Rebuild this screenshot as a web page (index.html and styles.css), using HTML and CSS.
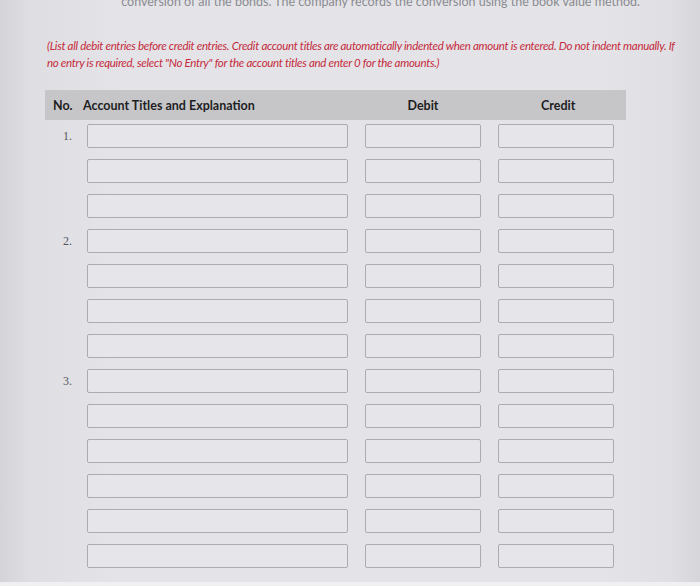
FILE: index.html
```html
<!DOCTYPE html>
<html lang="en">
<head>
<meta charset="utf-8">
<title>Journal entry</title>
<link rel="stylesheet" href="styles.css">
</head>
<body>
<div class="page">
  <p class="question">conversion of all the bonds. The company records the conversion using the book value method.</p>
  <p class="instructions">(List all debit entries before credit entries. Credit account titles are automatically indented when amount is entered. Do not indent manually. If no entry is required, select "No Entry" for the account titles and enter 0 for the amounts.)</p>
  <div class="journal">
    <div class="head">
      <span class="h-no">No.</span>
      <span class="h-acct">Account Titles and Explanation</span>
      <span class="h-amt">Debit</span>
      <span class="h-amt">Credit</span>
    </div>
    <div class="row"><span class="num">1.</span><span class="box acct"></span><span class="box amt"></span><span class="box amt"></span></div>
    <div class="row"><span class="num"></span><span class="box acct"></span><span class="box amt"></span><span class="box amt"></span></div>
    <div class="row"><span class="num"></span><span class="box acct"></span><span class="box amt"></span><span class="box amt"></span></div>
    <div class="row"><span class="num">2.</span><span class="box acct"></span><span class="box amt"></span><span class="box amt"></span></div>
    <div class="row"><span class="num"></span><span class="box acct"></span><span class="box amt"></span><span class="box amt"></span></div>
    <div class="row"><span class="num"></span><span class="box acct"></span><span class="box amt"></span><span class="box amt"></span></div>
    <div class="row"><span class="num"></span><span class="box acct"></span><span class="box amt"></span><span class="box amt"></span></div>
    <div class="row"><span class="num">3.</span><span class="box acct"></span><span class="box amt"></span><span class="box amt"></span></div>
    <div class="row"><span class="num"></span><span class="box acct"></span><span class="box amt"></span><span class="box amt"></span></div>
    <div class="row"><span class="num"></span><span class="box acct"></span><span class="box amt"></span><span class="box amt"></span></div>
    <div class="row"><span class="num"></span><span class="box acct"></span><span class="box amt"></span><span class="box amt"></span></div>
    <div class="row"><span class="num"></span><span class="box acct"></span><span class="box amt"></span><span class="box amt"></span></div>
    <div class="row"><span class="num"></span><span class="box acct"></span><span class="box amt"></span><span class="box amt"></span></div>
  </div>
</div>
</body>
</html>
```
FILE: styles.css
```css
html, body {
  margin: 0;
  padding: 0;
  height: 586px;
  overflow: hidden;
}
body {
  background: #f0f0f2;
  font-family: Lato, "Open Sans", sans-serif;
}
.page {
  height: 582px;
  overflow: hidden;
  background: linear-gradient(to right, #d4d4d8 0px, #dfdfe3 30px, #e4e4e8 120px, #e4e4e8 600px, #e0e0e4 670px, #d6d6da 700px);
}
.question {
  margin: -6px 60px 0 0;
  text-align: right;
  font-size: 12.5px;
  color: #8a8a90;
  line-height: 16px;
  white-space: nowrap;
}
.instructions {
  margin: 27px 22px 0 47px;
  font-size: 11.5px;
  line-height: 17px;
  font-style: italic;
  color: #c42a3c;
  letter-spacing: -0.3px;
}
.journal {
  margin: 19px 0 0 45px;
  width: 581px;
}
.head {
  display: grid;
  grid-template-columns: 38px 282px 116px 145px;
  align-items: center;
  height: 30px;
  background: #c6c6c9;
  font-weight: bold;
  font-size: 12.5px;
  color: #1e1e22;
}
.h-no { padding-left: 8px; }
.h-amt { text-align: center; }
.head .h-amt:last-child { text-align: left; padding-left: 60px; }
.row {
  display: grid;
  grid-template-columns: 25px 261px 116px 116px;
  column-gap: 17px;
  align-items: center;
  height: 24px;
  margin-top: 11px;
}
.head + .row { margin-top: 4px; }
.num {
  font-family: "Liberation Serif", serif;
  font-size: 12px;
  color: #56565c;
  padding-left: 18px;
  white-space: nowrap;
}
.box {
  display: block;
  height: 22px;
  border: 1px solid #acacb0;
  border-radius: 2px;
  background: #e6e6ea;
}
```
